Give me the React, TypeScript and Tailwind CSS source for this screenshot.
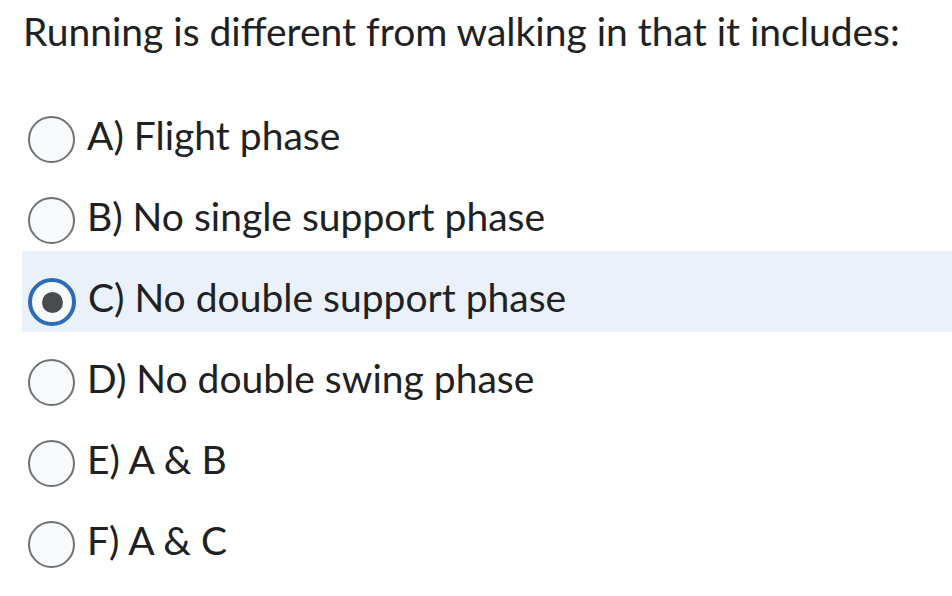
const options = [
  "A) Flight phase",
  "B) No single support phase",
  "C) No double support phase",
  "D) No double swing phase",
  "E) A & B",
  "F) A & C",
];

const selected = 2;

function Radio({ checked }: { checked: boolean }) {
  if (checked) {
    return (
      <span className="mt-[4px] ml-[6px] grid h-[48px] w-[48px] shrink-0 place-items-center rounded-full border-[4px] border-[#2b6cb6] bg-[#f9fafc]">
        <span className="h-[21px] w-[21px] rounded-full bg-[#494c4e]" />
      </span>
    );
  }
  return (
    <span className="mt-[4px] ml-[6px] h-[47px] w-[47px] shrink-0 rounded-full border-2 border-[#6e7376] bg-[#f9fafc]" />
  );
}

export default function App() {
  return (
    <div className="min-h-screen bg-white pl-[22px] text-[#202122]" style={{ fontFamily: "Lato, 'Noto Sans', sans-serif" }}>
      <h1 className="pt-[8px] pl-[1px] text-[39px] leading-[46px] font-normal">
        Running is different from walking in that it includes:
      </h1>
      <ul className="mt-[35px]">
        {options.map((label, i) => (
          <li
            key={label}
            className={`flex h-[81px] items-start gap-[12px] pt-[23px] ${i === selected ? "bg-[#eaf1fb]" : ""}`}
          >
            <Radio checked={i === selected} />
            <span className="text-[39px] leading-[46px]">{label}</span>
          </li>
        ))}
      </ul>
    </div>
  );
}
